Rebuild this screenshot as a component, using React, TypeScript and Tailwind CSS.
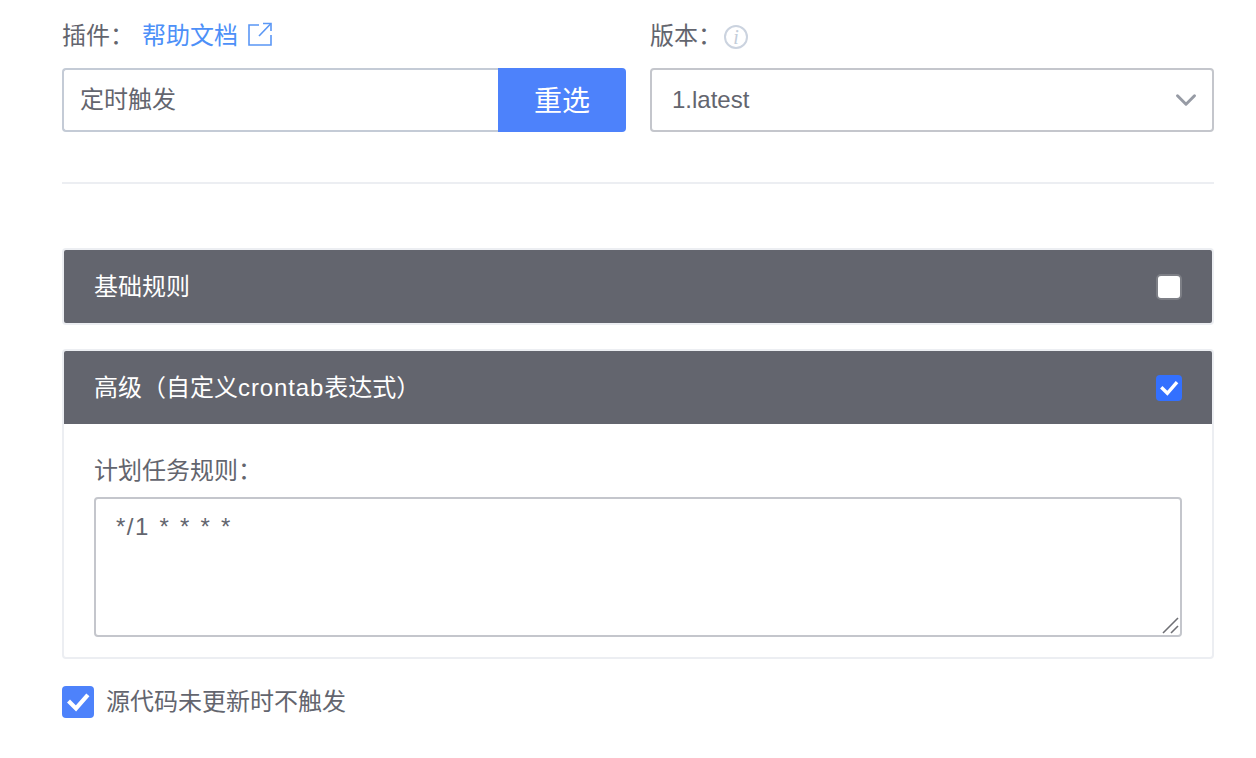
import { ChevronDown } from 'lucide-react';

const font = 'font-["Helvetica_Neue","Liberation_Sans","Noto_Sans_CJK_SC",sans-serif]';

function Check({ className }: { className?: string }) {
  return (
    <svg viewBox="0 0 32 32" className={className} fill="none">
      <path d="M8 16.5 L14 22.5 L24.5 10.5" stroke="#fff" strokeWidth="4.2" strokeLinecap="square" />
    </svg>
  );
}

function RuleHeader({ title, checked }: { title: React.ReactNode; checked?: boolean }) {
  return (
    <div className="flex h-[73px] items-center justify-between bg-[#63656e] pl-[30px] pr-[30px] text-[24px] text-white">
      <span>{title}</span>
      {checked ? (
        <span className="h-[26px] w-[26px] rounded-[4px] bg-[#3370ff]">
          <Check className="h-[26px] w-[26px]" />
        </span>
      ) : (
        <span className="h-[26px] w-[26px] rounded-[5px] border-2 border-[#7d7f86] bg-white" />
      )}
    </div>
  );
}

export default function App() {
  return (
    <div className={`${font} h-[758px] w-[1256px] overflow-hidden bg-white px-[62px] pt-[18px] text-[#63656e]`}>
      <div className="grid w-[1152px] grid-cols-2 gap-x-[24px]">
        <div>
          <div className="flex h-[36px] items-center text-[24px]">
            <span className="w-[80px]">插件：</span>
            <a className="text-[#4d90f8]">帮助文档</a>
            <svg viewBox="0 0 24 24" className="ml-[10px] h-[24px] w-[24px] -translate-y-[2px]" fill="none" stroke="#5a97f5" strokeWidth="1.6">
              <path d="M11 3 H1 V23 H23 V13" />
              <path d="M11 14 L22.5 2" />
              <path d="M15 1.5 H23 V9" />
            </svg>
          </div>
          <div className="mt-[14px] flex h-[64px]">
            <input
              readOnly
              value="定时触发"
              className="h-full min-w-0 flex-1 rounded-l-[4px] border-2 border-r-0 border-[#c4cbd6] pb-[5px] pl-[16px] text-[24px] text-[#63656e] outline-none"
            />
            <button className="h-full w-[128px] rounded-r-[4px] bg-[#4d82fb] pt-[4px] text-[28px] text-white">重选</button>
          </div>
        </div>
        <div>
          <div className="flex h-[36px] items-center text-[24px]">
            <span>版本：</span>
            <span className="ml-[2px] flex h-[24px] w-[24px] translate-y-[1px] items-center justify-center rounded-full border-2 border-[#cbd3df] font-['Liberation_Serif'] text-[20px] italic leading-none text-[#c3cdda]">
              i
            </span>
          </div>
          <div className="mt-[14px] flex h-[64px] items-center justify-between rounded-[4px] border-2 border-[#c4c6cc] pl-[20px] pr-[9px] text-[24px]">
            <span>1.latest</span>
            <ChevronDown className="h-[34px] w-[34px] text-[#979ba5]" strokeWidth={2.1} />
          </div>
        </div>
      </div>

      <div className="mt-[50px] h-[2px] w-[1152px] bg-[#eceef2]" />

      <div className="mt-[64px] w-[1152px] overflow-hidden rounded-[4px] border-2 border-[#eceef2]">
        <RuleHeader title="基础规则" />
      </div>

      <div className="mt-[24px] h-[310px] w-[1152px] overflow-hidden rounded-[4px] border-2 border-[#eceef2]">
        <RuleHeader title={<>高级（自定义<span className="tracking-[0.9px]">crontab</span>表达式）</>} checked />
        <div className="px-[30px] pt-[29px]">
          <div className="h-[36px] text-[24px] leading-[36px]">计划任务规则：</div>
          <div className="relative mt-[8px] h-[140px] w-[1088px]">
            <textarea
              readOnly
              value="*/1 * * * *"
              className="block h-full w-full resize-none rounded-[4px] border-2 border-[#c4c6cc] px-[20px] py-[10px] text-[24px] leading-[36px] tracking-[1.5px] text-[#63656e] [word-spacing:1.5px] outline-none"
            />
            <svg viewBox="0 0 20 20" className="absolute bottom-[2px] right-[2px] h-[20px] w-[20px]" stroke="#6f7075" strokeWidth="1.6" fill="none">
              <path d="M3 18 L18 3" />
              <path d="M11 18 L18 11" />
            </svg>
          </div>
        </div>
      </div>

      <div className="mt-[25px] flex items-center gap-[12px] text-[24px]">
        <span className="h-[32px] w-[32px] rounded-[4px] bg-[#4d82fb]">
          <Check className="h-[32px] w-[32px]" />
        </span>
        <span>源代码未更新时不触发</span>
      </div>
    </div>
  );
}
